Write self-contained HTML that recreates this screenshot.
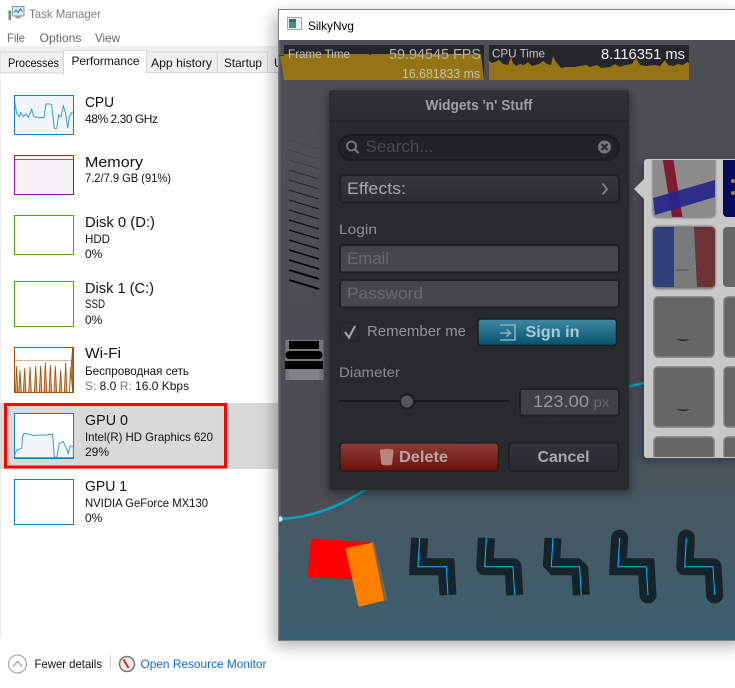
<!DOCTYPE html>
<html><head><meta charset="utf-8"><style>
html,body{margin:0;padding:0;background:#fff;width:735px;height:688px;overflow:hidden}
svg{display:block;font-family:"Liberation Sans","Noto Sans CJK SC",sans-serif}
</style></head><body>
<svg width="735" height="688" viewBox="0 0 735 688" xmlns="http://www.w3.org/2000/svg">
<defs>
<filter id="b8" x="-20%" y="-20%" width="140%" height="140%"><feGaussianBlur stdDeviation="8"/></filter>
<filter id="b4" x="-20%" y="-20%" width="140%" height="140%"><feGaussianBlur stdDeviation="4"/></filter>
<filter id="b1" x="-20%" y="-20%" width="140%" height="140%"><feGaussianBlur stdDeviation="1"/></filter>
<linearGradient id="teal" x1="0" y1="0" x2="0" y2="1"><stop offset="0" stop-color="#4e4f57"/><stop offset=".45" stop-color="#48575f"/><stop offset="1" stop-color="#3c5f6f"/></linearGradient>
<linearGradient id="bg" x1="0" y1="0" x2="0" y2="1"><stop offset="0" stop-color="#4e4e55"/><stop offset="1" stop-color="#4c4b52"/></linearGradient>
<linearGradient id="hd" x1="0" y1="0" x2="0" y2="1"><stop offset="0" stop-color="#303136"/><stop offset="1" stop-color="#2b2c31"/></linearGradient>
<linearGradient id="sig" x1="0" y1="0" x2="0" y2="1"><stop offset="0" stop-color="#3f88a5"/><stop offset="1" stop-color="#07526a"/></linearGradient>
<linearGradient id="del" x1="0" y1="0" x2="0" y2="1"><stop offset="0" stop-color="#8f3c3a"/><stop offset="1" stop-color="#6a110c"/></linearGradient>
<linearGradient id="can" x1="0" y1="0" x2="0" y2="1"><stop offset="0" stop-color="#30343a"/><stop offset="1" stop-color="#282c32"/></linearGradient>
<linearGradient id="eff" x1="0" y1="0" x2="0" y2="1"><stop offset="0" stop-color="#36373c"/><stop offset="1" stop-color="#2c2d32"/></linearGradient>
<linearGradient id="fld" x1="0" y1="0" x2="0" y2="1"><stop offset="0" stop-color="#43444a"/><stop offset="1" stop-color="#48494e"/></linearGradient>
<clipPath id="pop"><rect x="644" y="160" width="91" height="297"/></clipPath>
<clipPath id="th1"><rect x="653" y="155" width="62" height="62" rx="4"/></clipPath>
<clipPath id="win"><rect x="279" y="40" width="456" height="600"/></clipPath>
</defs>

<!-- Task Manager -->
<rect width="735" height="688" fill="#fff"/>
<g transform="translate(8,6)">
<rect x="4.500" y="0.500" width="11.500" height="9.500" fill="#dfe9f2" stroke="#7f98ad"/>
<path d="M6 6.500 L8 4 L10 6.500 L12.500 3 L14.500 5.500" fill="none" stroke="#2a8ad0" stroke-width="1.200"/>
<rect x="7.500" y="10.500" width="5" height="2" fill="#9aa5ad"/>
<rect x="0.500" y="6" width="2.500" height="8" fill="#7b8a80"/><rect x="0.500" y="4.500" width="2.500" height="3" fill="#3aa04a"/>
</g>
<text x="29" y="18" font-size="12" fill="#7e7e7e" textLength="72" lengthAdjust="spacingAndGlyphs">Task Manager</text>
<g font-size="12" fill="#666">
<text x="7" y="42" textLength="18" lengthAdjust="spacingAndGlyphs">File</text>
<text x="39.500" y="42" textLength="42" lengthAdjust="spacingAndGlyphs">Options</text>
<text x="95" y="42" textLength="25" lengthAdjust="spacingAndGlyphs">View</text>
</g>
<rect x="0" y="46" width="279" height="26" fill="#f0f0f0"/>
<rect x="0" y="72" width="279" height="1" fill="#d9d9d9"/>
<rect x="0" y="52" width="63" height="21" fill="#f0f0f0" stroke="#d9d9d9"/>
<rect x="146" y="52" width="71" height="20.500" fill="#f0f0f0" stroke="#d9d9d9"/>
<rect x="217.500" y="52" width="50" height="20.500" fill="#f0f0f0" stroke="#d9d9d9"/>
<rect x="63.500" y="50.500" width="83" height="24" fill="#fff" stroke="#d9d9d9"/>
<rect x="64" y="70" width="82" height="6" fill="#fff"/>
<g font-size="12" fill="#111">
<text x="8" y="67" textLength="51" lengthAdjust="spacingAndGlyphs">Processes</text>
<text x="71.500" y="65" textLength="68" lengthAdjust="spacingAndGlyphs">Performance</text>
<text x="151" y="67" textLength="61" lengthAdjust="spacingAndGlyphs">App history</text>
<text x="224" y="67" textLength="38" lengthAdjust="spacingAndGlyphs">Startup</text>
<text x="274" y="67">U</text>
</g>
<rect x="0" y="78" width="1" height="560" fill="#ececec"/>

<!-- selected row -->
<rect x="0" y="403" width="279" height="66" fill="#d9d9d9"/>
<rect x="5.500" y="404.500" width="220" height="62.500" fill="none" stroke="#ff0000" stroke-width="3"/>

<!-- graphs -->
<rect x="14.500" y="95.500" width="59" height="39" fill="#f1f6fa" stroke="#117dbb"/>
<g transform="scale(.33333)"><path d="M44 305 L50 340 L58 350 L62 338 L70 350 L78 342 L85 352 L95 328 L102 350 L115 352 L132 353 L138 312 L150 312 L155 315 L163 385 L170 385 L176 345 L183 350 L190 318 L197 340 L203 385 L208 350 L218 335" fill="none" stroke="#3f97cc" stroke-width="3"/></g>
<rect x="14.500" y="155.500" width="59" height="39" fill="#f4f2f4" stroke="#8b12ae"/>
<rect x="15" y="159" width="58" height="1" fill="#a04ec0"/>
<rect x="14.500" y="215.500" width="59" height="39" fill="#fff" stroke="#4da60c"/>
<rect x="14.500" y="281.500" width="59" height="45" fill="#fff" stroke="#4da60c"/>
<rect x="14.500" y="347.500" width="59" height="45" fill="#fff" stroke="#a74f01"/>
<rect x="15" y="360" width="58" height="1" fill="#dcb48e"/>
<g transform="translate(0,270) scale(.33333)" fill="#d3a884" stroke="#a74f01" stroke-width="2.500">
<path d="M46 367 L50 288 L53 367Z"/><path d="M56 367 L60 300 L64 367Z"/><path d="M70 367 L74 295 L78 367Z"/><path d="M86 367 L90 290 L94 367Z"/><path d="M103 367 L107 288 L111 367Z"/><path d="M118 367 L122 287 L126 367Z"/><path d="M132 367 L136 277 L140 367Z"/><path d="M147 367 L151 285 L155 367Z"/><path d="M162 367 L166 288 L170 367Z"/><path d="M178 367 L182 300 L186 367Z"/><path d="M193 367 L197 278 L201 367Z"/><path d="M208 367 L212 292 L218 367 L218 232 Z"/>
</g>
<rect x="14.500" y="413.500" width="59" height="45" fill="#fff" stroke="#117dbb"/>
<g transform="translate(0,270) scale(.33333)"><path d="M44 563 L44 555 L50 540 L65 535 L68 500 L72 490 L90 493 L100 497 L120 495 L140 495 L158 492 L163 560 L170 563 L178 520 L190 515 L197 530 L205 550 L210 528 L220 530 L220 563Z" fill="#f1f6fa" stroke="#3f97cc" stroke-width="3"/></g>
<rect x="14.500" y="479.500" width="59" height="45" fill="#fff" stroke="#117dbb"/>

<!-- row text -->
<g fill="#111">
<g font-size="15">
<text x="85" y="107" textLength="29" lengthAdjust="spacingAndGlyphs">CPU</text>
<text x="85" y="167" textLength="58" lengthAdjust="spacingAndGlyphs">Memory</text>
<text x="85" y="227" textLength="70" lengthAdjust="spacingAndGlyphs">Disk 0 (D:)</text>
<text x="85" y="293" textLength="69" lengthAdjust="spacingAndGlyphs">Disk 1 (C:)</text>
<text x="85" y="358" textLength="36" lengthAdjust="spacingAndGlyphs">Wi-Fi</text>
<text x="85" y="425" textLength="43" lengthAdjust="spacingAndGlyphs">GPU 0</text>
<text x="85" y="491" textLength="42" lengthAdjust="spacingAndGlyphs">GPU 1</text>
</g>
<g font-size="12">
<text x="85" y="123" textLength="73" lengthAdjust="spacing">48%  2.30 GHz</text>
<text x="85" y="182" textLength="86" lengthAdjust="spacingAndGlyphs">7.2/7.9 GB (91%)</text>
<text x="85" y="243" textLength="25" lengthAdjust="spacingAndGlyphs">HDD</text>
<text x="85" y="258">0%</text>
<text x="85" y="308" textLength="20" lengthAdjust="spacingAndGlyphs">SSD</text>
<text x="85" y="324">0%</text>
<text x="85" y="375" textLength="104" lengthAdjust="spacingAndGlyphs">Беспроводная сеть</text>
<text x="85" y="390"><tspan fill="#777">S:</tspan> 8.0 <tspan fill="#777">R:</tspan> 16.0 Kbps</text>
<text x="85" y="441" textLength="128" lengthAdjust="spacingAndGlyphs">Intel(R) HD Graphics 620</text>
<text x="85" y="456">29%</text>
<text x="85" y="507" textLength="123" lengthAdjust="spacingAndGlyphs">NVIDIA GeForce MX130</text>
<text x="85" y="522">0%</text>
</g>
</g>

<!-- footer -->
<circle cx="17.500" cy="664" r="9" fill="#fff" stroke="#b0b0b0" stroke-width="1.300"/>
<path d="M13 666.500 L17.500 661.500 L22 666.500" fill="none" stroke="#a0a0a0" stroke-width="1.300"/>
<text x="34.500" y="668" font-size="12" fill="#111" textLength="67.500" lengthAdjust="spacingAndGlyphs">Fewer details</text>
<rect x="110" y="655" width="1" height="15" fill="#cfcfcf"/>
<circle cx="127" cy="664" r="7.500" fill="#efeae2" stroke="#777" stroke-width="1.500"/>
<path d="M123.500 659.500 L128.500 668" stroke="#c8202a" stroke-width="1.800"/>
<text x="140.500" y="668" font-size="12" fill="#0f6ad6" textLength="126" lengthAdjust="spacingAndGlyphs">Open Resource Monitor</text>

<!-- SilkyNvg window -->
<rect x="274" y="14" width="470" height="632" fill="#000" opacity=".3" filter="url(#b8)"/>
<rect x="278.500" y="9.500" width="460" height="631" fill="#fff" stroke="#7f7f7f"/>
<rect x="287.500" y="17.500" width="14" height="12" fill="#eef0f0" stroke="#9aa"/>
<rect x="289" y="19" width="7" height="9" fill="#4b8a90"/><rect x="289" y="19" width="7" height="3" fill="#5a5f66"/>
<text x="308" y="30" font-size="12" fill="#000" textLength="46" lengthAdjust="spacingAndGlyphs">SilkyNvg</text>
<rect x="279" y="40" width="456" height="600" fill="url(#bg)"/>
<rect x="279" y="40" width="1.500" height="600" fill="#5f5f65"/>

<g clip-path="url(#win)">
<path d="M279 519 C330 517 362 492 391 472 C412 453 440 442 478 439 C520 437 545 425 570 411 C595 396 615 388 660 380 L735 372 L735 640 L279 640Z" fill="url(#teal)"/>
<path d="M279 519 C330 517 362 492 391 472 C412 453 440 442 478 439 C520 437 545 425 570 411 C595 396 615 388 660 380 L735 372" fill="none" stroke="#00a5c6" stroke-width="2.500"/>
<circle cx="280" cy="519" r="3" fill="#cfe6ee" stroke="#00a5c6"/>
<circle cx="478" cy="439" r="3" fill="#3f8ea3" stroke="#00a5c6"/>
</g>

<!-- frame graphs -->
<rect x="284" y="45" width="200" height="35" fill="#25262b"/>
<path d="M280 54 L368 54 L370 55 L372 54 L481 54 L484 80 L284 80Z" fill="#947414"/>
<path d="M279 56 L284 55" stroke="#222" stroke-width="1"/>
<rect x="489" y="45" width="200" height="35" fill="#25262b"/>
<path d="M489 61 L492 63 L495 62 L499 60 L503 64 L508 65 L511 57 L513 63 L516 66 L520 64 L524 65 L528 62 L532 66 L539 64 L543 61 L547 64 L551 65 L553 56 L556 62 L561 68 L566 67 L575 67 L580 66 L586 65 L590 67 L597 65 L601 68 L610 67 L615 64 L620 67 L625 65 L632 64 L636 58 L640 65 L646 66 L655 65 L660 66 L665 60 L668 65 L673 66 L678 64 L683 65 L687 62 L689 63 L689 80 L489 80Z" fill="#947414"/>
<g font-size="12">
<text x="288" y="58" fill="#c4c4c0" textLength="62" lengthAdjust="spacingAndGlyphs">Frame Time</text>
<text x="492" y="57.500" fill="#c4c4c6" textLength="53" lengthAdjust="spacingAndGlyphs">CPU Time</text>
</g>
<text x="389" y="59" font-size="15" fill="#b8b39e" textLength="92" lengthAdjust="spacingAndGlyphs">59.94545 FPS</text>
<text x="402" y="78" font-size="13" fill="#c9c2a8" textLength="78" lengthAdjust="spacingAndGlyphs">16.681833 ms</text>
<text x="601" y="59" font-size="15" fill="#f0f0f0" textLength="84" lengthAdjust="spacingAndGlyphs">8.116351 ms</text>

<!-- eye lines -->
<g stroke="#000" fill="none">
<path d="M289 110 L319 120" stroke-width=".4" opacity=".06"/>
<path d="M289 120 L319 129" stroke-width=".5" opacity=".09"/>
<path d="M289 130 L319 138.500" stroke-width=".6" opacity=".12"/>
<path d="M289 140 L319 149" stroke-width=".7" opacity=".16"/>
<path d="M289 150 L319 159" stroke-width=".8" opacity=".22"/>
<path d="M289 160 L319 169" stroke-width=".9" opacity=".3"/>
<path d="M289 170 L319 179" stroke-width="1" opacity=".4"/>
<path d="M289 180 L319 189" stroke-width="1" opacity=".5"/>
<path d="M289 190 L319 199" stroke-width="1" opacity=".6"/>
<path d="M289 200 L319 209" stroke-width="1.100" opacity=".7"/>
<path d="M289 210 L319 219" stroke-width="1.100" opacity=".75"/>
<path d="M289 220 L319 229" stroke-width="1.200" opacity=".8"/>
<path d="M289 230 L319 239" stroke-width="1.300" opacity=".85"/>
<path d="M289 240 L319 249" stroke-width="1.400" opacity=".9"/>
<path d="M289 250 L319 259" stroke-width="1.500" opacity=".92"/>
<path d="M289 260 L319 269" stroke-width="1.600" opacity=".95"/>
<path d="M289 270 L319 279" stroke-width="1.700"/>
<path d="M289 280 L319 289" stroke-width="1.900"/>
</g>
<!-- black bars -->
<rect x="285.500" y="340" width="38" height="40" fill="#78787c"/>
<rect x="289" y="369" width="30" height="11" fill="#828186"/>
<rect x="289" y="341" width="30" height="8" fill="#000"/>
<rect x="285.500" y="351" width="37" height="8" rx="4" fill="#000"/>
<rect x="285" y="361" width="38" height="8" fill="#000"/>

<!-- panel -->
<rect x="327" y="92" width="304" height="402" rx="4" fill="#000" opacity=".35" filter="url(#b4)"/>
<rect x="329" y="90" width="300" height="400" rx="3" fill="#282a2e" fill-opacity=".95"/>
<path d="M329 121 V93 a3 3 0 0 1 3 -3 H626 a3 3 0 0 1 3 3 V121Z" fill="url(#hd)"/>
<rect x="329" y="120.500" width="300" height="1" fill="#1e1f23"/>
<text x="479" y="110" font-size="15" font-weight="bold" fill="#a0a0a2" text-anchor="middle" textLength="107" lengthAdjust="spacingAndGlyphs">Widgets 'n' Stuff</text>

<!-- search -->
<rect x="339" y="135" width="280" height="25" rx="12.500" fill="#212226" stroke="#1a1b1e" stroke-width="2"/>
<circle cx="351.500" cy="146" r="4.500" fill="none" stroke="#77787c" stroke-width="1.800"/>
<path d="M355 149.500 L358.500 153" stroke="#77787c" stroke-width="2.200"/>
<text x="365.500" y="152" font-size="17" fill="#4a4b50" textLength="68" lengthAdjust="spacingAndGlyphs">Search...</text>
<circle cx="604.500" cy="147" r="6.500" fill="#77787c"/>
<path d="M601.500 144 L607.500 150 M607.500 144 L601.500 150" stroke="#28292d" stroke-width="2"/>

<!-- effects -->
<rect x="340" y="175" width="279" height="27.500" rx="4" fill="url(#eff)" stroke="#1f2023" stroke-width="2"/>
<text x="347" y="194" font-size="16.500" fill="#a9a9ab" textLength="59" lengthAdjust="spacingAndGlyphs">Effects:</text>
<path d="M602.500 183.500 L607 189 L602.500 194.500" fill="none" stroke="#808185" stroke-width="1.800"/>

<text x="339" y="234" font-size="14" fill="#909194" textLength="38" lengthAdjust="spacingAndGlyphs">Login</text>
<rect x="340" y="245" width="279" height="27.500" rx="3" fill="url(#fld)" stroke="#1f2023" stroke-width="2"/>
<text x="347" y="264" font-size="16.500" fill="#68696d" textLength="42" lengthAdjust="spacingAndGlyphs">Email</text>
<rect x="340" y="280" width="279" height="27.500" rx="3" fill="url(#fld)" stroke="#1f2023" stroke-width="2"/>
<text x="347" y="299" font-size="16.500" fill="#68696d" textLength="76" lengthAdjust="spacingAndGlyphs">Password</text>

<!-- remember -->
<rect x="340.500" y="323" width="17.500" height="18" rx="3" fill="#2b2c31" stroke="#222327"/>
<path d="M345 332 L349 337.500 L355 326" fill="none" stroke="#a5a6a8" stroke-width="2"/>
<text x="367" y="336" font-size="14.500" fill="#959598" textLength="99" lengthAdjust="spacingAndGlyphs">Remember me</text>
<rect x="478" y="319" width="138.500" height="26.500" rx="3" fill="url(#sig)" stroke="#1a1d21" stroke-width="1.500"/>
<path d="M503 325 H518 V340 H503 M503 333 H513 M509.500 329.500 L513.500 333 L509.500 336.500" fill="none" stroke="#80b4c6" stroke-width="1.600" transform="translate(-3,0)"/>
<text x="525.500" y="337" font-size="16" font-weight="bold" fill="#a8cbd8" textLength="54" lengthAdjust="spacingAndGlyphs">Sign in</text>

<!-- diameter -->
<text x="339" y="377" font-size="14" fill="#8c8d90" textLength="61" lengthAdjust="spacingAndGlyphs">Diameter</text>
<rect x="339" y="400" width="170" height="2" rx="1" fill="#17181b"/>
<circle cx="407" cy="401.500" r="8" fill="#1c1d20"/>
<circle cx="407" cy="401.500" r="6" fill="#56575b"/>
<rect x="520" y="389" width="99" height="26.500" rx="3" fill="#414247" fill-opacity=".92" stroke="#1f2023" stroke-width="2"/>
<text x="533" y="407" font-size="16.500" fill="#97989b" textLength="56" lengthAdjust="spacingAndGlyphs">123.00</text>
<text x="593.500" y="407" font-size="14" fill="#68696d" textLength="16" lengthAdjust="spacingAndGlyphs">px</text>

<!-- buttons -->
<rect x="340" y="443" width="158.500" height="28" rx="3" fill="url(#del)" stroke="#1d1f23" stroke-width="1.500"/>
<path d="M380.500 451 H393 L391.500 464 Q386.500 465.500 382 464Z M384.500 449.500 H389 M380.500 450 H393" fill="#b68580" stroke="#b68580" stroke-width="1.200"/>
<text x="399" y="462" font-size="16" font-weight="bold" fill="#bfa6a4" textLength="49" lengthAdjust="spacingAndGlyphs">Delete</text>
<rect x="509" y="443" width="109.500" height="28" rx="3" fill="url(#can)" stroke="#1d1f23" stroke-width="1.500"/>
<text x="537.500" y="462" font-size="16" font-weight="bold" fill="#a8a9ab" textLength="52" lengthAdjust="spacingAndGlyphs">Cancel</text>

<!-- popup -->
<rect x="640" y="162" width="100" height="300" fill="#000" opacity=".25" filter="url(#b4)"/>
<path d="M644 162 a3 3 0 0 1 3 -3 H735 V458 H647 a3 3 0 0 1 -3 -3 V199 L634 189 L644 179Z" fill="#c8c8c8"/>
<g clip-path="url(#pop)">
<rect x="652.500" y="150" width="63" height="68" rx="5" fill="#77777a" filter="url(#b1)"/>
<rect x="653" y="155" width="62" height="62" rx="4" fill="#8b8b8b"/>
<g clip-path="url(#th1)">
<path d="M662 155 L672.500 155 L682.500 217 L672 217Z" fill="#7e1a34"/>
<path d="M653 198 L715 180 L715 197 L655 215Z" fill="#27258a" fill-opacity=".92"/>
</g>
<rect x="723" y="155" width="20" height="62" rx="4" fill="#0a0a5a"/>
<circle cx="733" cy="181" r="2" fill="#a08a28"/><circle cx="733" cy="193" r="2" fill="#a08a28"/>
<rect x="652.500" y="226" width="63" height="63" rx="5" fill="#6c6c6c" filter="url(#b1)"/>
<rect x="653" y="227" width="62" height="60.500" rx="4" fill="#7a7a7a"/>
<path d="M657 227 H674 L674 287 H657 Q653 287 653 283 V231 Q653 227 657 227Z" fill="#2f3f78"/>
<path d="M694 227 H711 Q715 227 715 231 V283 Q715 287 711 287 H697Z" fill="#6b3333"/>
<path d="M676 270 H689" stroke="#4c4c4c" stroke-width="1"/>
<rect x="723" y="227" width="20" height="60" rx="4" fill="#666"/>
<g fill="#666" stroke="#808080" stroke-width="1.500">
<rect x="654" y="297" width="60" height="60" rx="4"/>
<rect x="654" y="367" width="60" height="60" rx="4"/>
<rect x="654" y="437" width="60" height="60" rx="4"/>
<rect x="724" y="297" width="20" height="60" rx="4"/>
<rect x="724" y="367" width="20" height="60" rx="4"/>
<rect x="724" y="437" width="20" height="60" rx="4"/>
</g>
<path d="M676 339 Q683 340 690 339 Q683 343 676 339Z" fill="#222"/>
<path d="M676 409 Q683 410 690 409 Q683 413 676 409Z" fill="#222"/>
</g>

<!-- red/orange -->
<path d="M311 538.500 L370 542.500 L380 580 L307.500 577.500Z" fill="#ff0000"/>
<path d="M370 542 L374 541.500 L387.500 600 L384 601Z" fill="#7a6a50"/>
<path d="M345.300 548.300 L372.300 542.700 L384 600.700 L358.700 606.700Z" fill="#ff8000"/>

<!-- stroke demos -->
<g fill="none" stroke="#16232a" stroke-width="17" stroke-opacity="1">
<path d="M419.700 538 L418 566.700 L446.300 566.700 L448 595" stroke-linejoin="miter" stroke-linecap="butt"/>
<path d="M486.400 538 L484.700 566.700 L513 566.700 L514.700 595" stroke-linejoin="round" stroke-linecap="butt"/>
<path d="M553 538 L551.300 566.700 L579.600 566.700 L581.300 595" stroke-linejoin="bevel" stroke-linecap="butt"/>
<path d="M619.700 538 L618 566.700 L646.300 566.700 L648 595" stroke-linejoin="miter" stroke-linecap="round"/>
<path d="M686.400 538 L684.700 566.700 L713 566.700 L714.700 595" stroke-linejoin="round" stroke-linecap="round"/>
</g>
<g fill="none" stroke="#00c0ff" stroke-width="1">
<path d="M419.700 538 L418 566.700 L446.300 566.700 L448 595"/>
<path d="M486.400 538 L484.700 566.700 L513 566.700 L514.700 595"/>
<path d="M553 538 L551.300 566.700 L579.600 566.700 L581.300 595"/>
<path d="M619.700 538 L618 566.700 L646.300 566.700 L648 595"/>
<path d="M686.400 538 L684.700 566.700 L713 566.700 L714.700 595"/>
</g>
</svg>
</body></html>
